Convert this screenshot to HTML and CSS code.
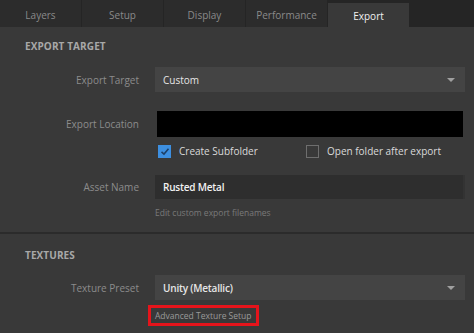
FILE: index.html
```html
<!DOCTYPE html>
<html lang="en">
<head>
    <meta charset="UTF-8">
    <meta name="viewport" content="width=device-width, initial-scale=1.0">
    <title>Export Settings</title>
    <link rel="stylesheet" href="styles.css">
</head>
<body>
    <div class="tabs">
        <div class="tab">Layers</div>
        <div class="tab">Setup</div>
        <div class="tab">Display</div>
        <div class="tab">Performance</div>
        <div class="tab active">Export</div>
    </div>

    <div class="panel">
        <div class="section">
            <h2 class="section-title">EXPORT TARGET</h2>

            <div class="row row-target">
                <div class="label">Export Target</div>
                <div class="control dropdown">
                    <span>Custom</span>
                    <span class="arrow"></span>
                </div>
            </div>

            <div class="row row-location">
                <div class="label">Export Location</div>
                <div class="control location"></div>
            </div>

            <div class="checks">
                <label class="check check-sub">
                    <span class="box checked">
                        <svg width="10" height="9" viewBox="0 0 10 9"><path d="M1.5 4.8 L4 7 L8.5 1.8" fill="none" stroke="#1d3f66" stroke-width="1.6"/></svg>
                    </span>
                    Create Subfolder
                </label>
                <label class="check">
                    <span class="box"></span>
                    Open folder after export
                </label>
            </div>

            <div class="row row-asset">
                <div class="label">Asset Name</div>
                <div class="control text-input">Rusted Metal</div>
            </div>
            <div class="hint">Edit custom export filenames</div>
        </div>

        <div class="section textures">
            <h2 class="section-title">TEXTURES</h2>

            <div class="row row-preset">
                <div class="label">Texture Preset</div>
                <div class="control dropdown">
                    <span class="value">Unity (Metallic)</span>
                    <span class="arrow"></span>
                </div>
            </div>
            <div class="advanced"><span>Advanced Texture Setup</span></div>
        </div>
    </div>
</body>
</html>
```

FILE: styles.css
```css
body {
    margin: 0;
    padding: 0;
    width: 474px;
    height: 333px;
    overflow: hidden;
    background-color: #393939;
    font-family: "Open Sans", "Noto Sans", sans-serif;
    color: #c8c8c8;
}
.tabs {
    display: flex;
    height: 27px;
    background-color: #252525;
}
.tab {
    width: 81px;
    margin-right: 1px;
    background-color: #2c2c2c;
    color: #8a8a8a;
    font-size: 10px;
    line-height: 30px;
    text-align: center;
}
.tab.active {
    margin-top: 3px;
    line-height: 27px;
    background-color: #393939;
    color: #f0f0f0;
}
.section {
    padding: 12px 9px 0 25px;
}
.section-title {
    margin: 0;
    font-size: 10px;
    line-height: 14px;
    font-weight: 700;
    color: #a8a8a8;
    letter-spacing: 0.1px;
}
.row {
    display: flex;
    align-items: center;
}
.label {
    width: 130px;
    padding-right: 16px;
    box-sizing: border-box;
    text-align: right;
    font-size: 10px;
    color: #8c8c8c;
}
.control {
    flex: 1;
    box-sizing: border-box;
    font-size: 10px;
}
.dropdown {
    display: flex;
    align-items: center;
    justify-content: space-between;
    height: 25px;
    padding: 0 10px 0 8px;
    background-color: #444444;
    color: #e6e6e6;
}
.arrow {
    width: 0;
    height: 0;
    border-left: 4px solid transparent;
    border-right: 4px solid transparent;
    border-top: 4px solid #a0a0a0;
}
.row-target {
    margin-top: 14px;
}
.row-location {
    margin-top: 19px;
}
.location {
    height: 26px;
    margin: 0 2px;
    background-color: #000000;
}
.checks {
    display: flex;
    margin: 7px 0 0 133px;
    font-size: 10px;
    color: #dadada;
}
.check {
    display: flex;
    align-items: center;
    gap: 8px;
}
.check-sub {
    width: 148px;
}
.box {
    display: flex;
    align-items: center;
    justify-content: center;
    width: 13px;
    height: 13px;
    box-sizing: border-box;
    border: 1px solid #6e6e6e;
}
.box.checked {
    background-color: #3d8fe0;
    border-color: #3d8fe0;
}
.row-asset {
    margin-top: 17px;
}
.text-input {
    height: 24px;
    line-height: 24px;
    padding-left: 8px;
    background-color: #2e2e2e;
    color: #f2f2f2;
    font-weight: 600;
    letter-spacing: -0.2px;
    border-right: 2px solid #333333;
}
.hint {
    margin: 7px 0 0 130px;
    font-size: 8.5px;
    line-height: 14px;
    color: #7a7a7a;
}
.textures {
    margin-top: 12px;
    padding-top: 14px;
    border-top: 2px solid #2b2b2b;
}
.row-preset {
    margin-top: 13px;
}
.row-preset .dropdown {
    font-weight: 600;
    letter-spacing: -0.2px;
}
.advanced {
    margin: 2px 0 0 123px;
}
.advanced span {
    display: inline-block;
    padding: 2px 4px;
    border: 3px solid #e5141b;
    font-size: 8.5px;
    line-height: 11px;
    color: #9a9a9a;
}
```
